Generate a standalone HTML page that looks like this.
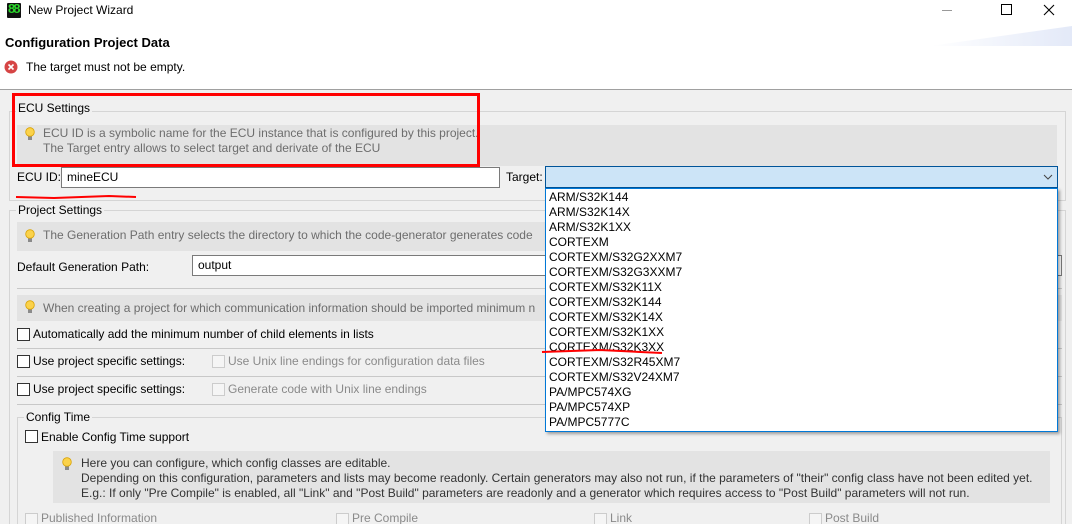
<!DOCTYPE html>
<html style="width:1072px;height:524px;overflow:hidden"><head><meta charset="utf-8"><style>
*{box-sizing:border-box;margin:0;padding:0}
body{width:1072px;height:524px;overflow:hidden;background:#f0f0f0;font-family:"Liberation Sans",sans-serif;font-size:12px;color:#000;position:relative}
.a{position:absolute;white-space:nowrap}
.t{line-height:15px}
.cb{position:absolute;width:13px;height:13px;border:1px solid #333;background:#fff}
.cbd{position:absolute;width:13px;height:13px;border:1px solid #ccc;background:#f5f5f5}
.gray{color:#6d6d6d}
.dis{color:#8a8a8a}
.info{position:absolute;background:#e3e3e3}
.sep{position:absolute;height:1px;background:#c8c8c8}
.grp{position:absolute;border:1px solid #d5d5d5}
.bulb{position:absolute;width:10px;height:14px}
</style></head><body>
<div class="a" style="left:0;top:0;width:1072px;height:89px;background:#fff"></div>
<div class="a" style="left:930px;top:26px;width:142px;height:20px;background:linear-gradient(to right,#fff,#e3e9f8);clip-path:polygon(0 100%,100% 0,100% 100%)"></div>
<div class="a" style="left:7px;top:3px;width:14px;height:15px;background:#111;border-radius:1px"></div>
<div class="a" style="left:8px;top:1px;color:#2bd42b;font-weight:bold;font-size:13px;letter-spacing:-2px">88</div>
<div class="a t" style="left:28px;top:3px">New Project Wizard</div>
<div class="a" style="left:942px;top:10px;width:10px;height:1px;background:#999"></div>
<div class="a" style="left:1001px;top:4px;width:11px;height:11px;border:1px solid #000"></div>
<svg class="a" style="left:1043px;top:4px" width="12" height="12"><path d="M1 1L11 11M11 1L1 11" stroke="#000" stroke-width="1.1"/></svg>
<div class="a" style="left:5px;top:35px;font-weight:bold;font-size:13px">Configuration Project Data</div>
<svg class="a" style="left:4px;top:60px" width="14" height="14"><circle cx="7" cy="7" r="6.5" fill="#d64545"/><path d="M4.5 4.5L9.5 9.5M9.5 4.5L4.5 9.5" stroke="#fff" stroke-width="1.6"/></svg>
<div class="a t" style="left:26px;top:60px">The target must not be empty.</div>
<div class="a" style="left:0;top:89px;width:1072px;height:1px;background:#a0a0a0"></div>

<div class="grp" style="left:9px;top:111px;width:1057px;height:90px"></div>
<div class="a t" style="left:16px;top:101px;background:#f0f0f0;padding:0 2px">ECU Settings</div>
<div class="info" style="left:17px;top:125px;width:1040px;height:41px"></div>
<svg class="bulb" style="left:25px;top:127px" viewBox="0 0 10 14"><circle cx="5" cy="5" r="4.3" fill="#fbd24a" stroke="#d9a200" stroke-width=".8"/><rect x="3" y="9.5" width="4" height="3.5" fill="#8a8a8a"/></svg>
<div class="a t gray" style="left:43px;top:126px">ECU ID is a symbolic name for the ECU instance that is configured by this project.</div>
<div class="a t gray" style="left:43px;top:141px">The Target entry allows to select target and derivate of the ECU</div>
<div class="a t" style="left:17px;top:170px">ECU ID:</div>
<div class="a" style="left:61px;top:167px;width:439px;height:21px;background:#fff;border:1px solid #7a7a7a"></div>
<div class="a t" style="left:67px;top:170px">mineECU</div>
<div class="a t" style="left:506px;top:170px">Target:</div>
<div class="a" style="left:545px;top:166px;width:513px;height:22px;background:#cce4f7;border:1px solid #005499"></div>
<svg class="a" style="left:1043px;top:174px" width="10" height="6"><path d="M1 1L5 5L9 1" stroke="#444" fill="none"/></svg>
<div class="a" style="left:12px;top:93px;width:468px;height:74px;border:3px solid #ff0000"></div>
<svg class="a" style="left:14px;top:192px" width="125" height="8"><path d="M2 5L40 6L95 4L122 5" stroke="#f00" stroke-width="2" fill="none"/></svg>

<div class="grp" style="left:9px;top:210px;width:1057px;height:320px"></div>
<div class="a t" style="left:16px;top:203px;background:#f0f0f0;padding:0 2px">Project Settings</div>
<div class="info" style="left:17px;top:222px;width:1040px;height:29px"></div>
<svg class="bulb" style="left:25px;top:229px" viewBox="0 0 10 14"><circle cx="5" cy="5" r="4.3" fill="#fbd24a" stroke="#d9a200" stroke-width=".8"/><rect x="3" y="9.5" width="4" height="3.5" fill="#8a8a8a"/></svg>
<div class="a t gray" style="left:43px;top:228px">The Generation Path entry selects the directory to which the code-generator generates code</div>
<div class="a t" style="left:17px;top:260px">Default Generation Path:</div>
<div class="a" style="left:192px;top:255px;width:870px;height:21px;background:#fff;border:1px solid #7a7a7a"></div>
<div class="a t" style="left:198px;top:258px">output</div>
<div class="sep" style="left:17px;top:288px;width:1045px"></div>
<div class="info" style="left:17px;top:295px;width:1045px;height:26px"></div>
<svg class="bulb" style="left:25px;top:300px" viewBox="0 0 10 14"><circle cx="5" cy="5" r="4.3" fill="#fbd24a" stroke="#d9a200" stroke-width=".8"/><rect x="3" y="9.5" width="4" height="3.5" fill="#8a8a8a"/></svg>
<div class="a t gray" style="left:43px;top:301px">When creating a project for which communication information should be imported minimum n</div>
<div class="cb" style="left:17px;top:328px"></div>
<div class="a t" style="left:33px;top:327px">Automatically add the minimum number of child elements in lists</div>
<div class="sep" style="left:17px;top:348px;width:1045px"></div>
<div class="cb" style="left:17px;top:355px"></div>
<div class="a t" style="left:33px;top:354px">Use project specific settings:</div>
<div class="cbd" style="left:212px;top:355px"></div>
<div class="a t dis" style="left:228px;top:354px">Use Unix line endings for configuration data files</div>
<div class="sep" style="left:17px;top:376px;width:1045px"></div>
<div class="cb" style="left:17px;top:383px"></div>
<div class="a t" style="left:33px;top:382px">Use project specific settings:</div>
<div class="cbd" style="left:212px;top:383px"></div>
<div class="a t dis" style="left:228px;top:382px">Generate code with Unix line endings</div>
<div class="sep" style="left:17px;top:404px;width:1045px"></div>

<div class="grp" style="left:17px;top:417px;width:1045px;height:110px"></div>
<div class="a t" style="left:24px;top:410px;background:#f0f0f0;padding:0 2px">Config Time</div>
<div class="cb" style="left:25px;top:430px"></div>
<div class="a t" style="left:41px;top:430px">Enable Config Time support</div>
<div class="info" style="left:53px;top:451px;width:997px;height:52px"></div>
<svg class="bulb" style="left:62px;top:457px" viewBox="0 0 10 14"><circle cx="5" cy="5" r="4.3" fill="#fbd24a" stroke="#d9a200" stroke-width=".8"/><rect x="3" y="9.5" width="4" height="3.5" fill="#8a8a8a"/></svg>
<div class="a t" style="left:81px;top:456px;color:#333">Here you can configure, which config classes are editable.</div>
<div class="a t" style="left:81px;top:471px;color:#333">Depending on this configuration, parameters and lists may become readonly. Certain generators may also not run, if the parameters of "their" config class have not been edited yet.</div>
<div class="a t" style="left:81px;top:486px;color:#333">E.g.: If only "Pre Compile" is enabled, all "Link" and "Post Build" parameters are readonly and a generator which requires access to "Post Build" parameters will not run.</div>
<div class="cbd" style="left:25px;top:513px"></div>
<div class="a t dis" style="left:41px;top:511px">Published Information</div>
<div class="cbd" style="left:336px;top:513px"></div>
<div class="a t dis" style="left:352px;top:511px">Pre Compile</div>
<div class="cbd" style="left:594px;top:513px"></div>
<div class="a t dis" style="left:610px;top:511px">Link</div>
<div class="cbd" style="left:809px;top:513px"></div>
<div class="a t dis" style="left:825px;top:511px">Post Build</div>

<div class="a" style="left:545px;top:188px;width:513px;height:244px;background:#fff;border:1px solid #0078d7;box-shadow:2px 2px 3px rgba(0,0,0,.35);padding:1px 0 0 3px;line-height:15px">
ARM/S32K144<br>ARM/S32K14X<br>ARM/S32K1XX<br>CORTEXM<br>CORTEXM/S32G2XXM7<br>CORTEXM/S32G3XXM7<br>CORTEXM/S32K11X<br>CORTEXM/S32K144<br>CORTEXM/S32K14X<br>CORTEXM/S32K1XX<br>CORTEXM/S32K3XX<br>CORTEXM/S32R45XM7<br>CORTEXM/S32V24XM7<br>PA/MPC574XG<br>PA/MPC574XP<br>PA/MPC5777C</div>
<svg class="a" style="left:540px;top:347px" width="125" height="10"><path d="M2 5L60 3L122 6" stroke="#f00" stroke-width="2" fill="none"/></svg>
</body></html>
